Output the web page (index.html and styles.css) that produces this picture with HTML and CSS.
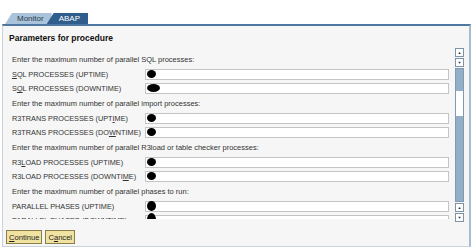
FILE: index.html
```html
<!DOCTYPE html>
<html lang="en">
<head>
  <meta charset="UTF-8" />
  <title>Parameters for procedure</title>
  <link rel="stylesheet" href="styles.css">
</head>
<body>
  <div class="tabs">
    <div class="tab">Monitor</div>
    <div class="tab active">ABAP</div>
  </div>
  <div class="panel">
    <h2 class="title">Parameters for procedure</h2>
    <div class="scroll">
      <div class="fields">
        <div class="row note">Enter the maximum number of parallel SQL processes:</div>
        <div class="row">
          <label><u>S</u>QL PROCESSES (UPTIME)</label>
          <div class="field"><span class="blob"></span></div>
        </div>
        <div class="row">
          <label>S<u>Q</u>L PROCESSES (DOWNTIME)</label>
          <div class="field"><span class="blob wide"></span></div>
        </div>
        <div class="row note">Enter the maximum number of parallel import processes:</div>
        <div class="row">
          <label>R3TRANS PROCESSES (UPT<u>I</u>ME)</label>
          <div class="field"><span class="blob"></span></div>
        </div>
        <div class="row">
          <label>R3TRANS PROCESSES (DO<u>W</u>NTIME)</label>
          <div class="field"><span class="blob"></span></div>
        </div>
        <div class="row note">Enter the maximum number of parallel R3load or table checker processes:</div>
        <div class="row">
          <label>R3<u>L</u>OAD PROCESSES (UPTIME)</label>
          <div class="field"><span class="blob"></span></div>
        </div>
        <div class="row">
          <label>R3LOAD PROCESSES (DOWNTI<u>M</u>E)</label>
          <div class="field"><span class="blob"></span></div>
        </div>
        <div class="row note">Enter the maximum number of parallel phases to run:</div>
        <div class="row">
          <label>PARALLEL PHASES (UPTIME)</label>
          <div class="field"><span class="blob big"></span></div>
        </div>
        <div class="row">
          <label>PARALLEL PHASES (DOWNTIME)</label>
          <div class="field"><span class="blob tall"></span></div>
        </div>
      </div>
      <div class="scrollbar">
        <div class="arrow">&#9650;</div>
        <div class="arrow">&#9660;</div>
        <div class="track"><div class="thumb"></div></div>
        <div class="arrow">&#9650;</div>
        <div class="arrow">&#9660;</div>
      </div>
    </div>
    <div class="buttons">
      <button class="btn"><u>C</u>ontinue</button>
      <button class="btn">C<u>a</u>ncel</button>
    </div>
  </div>
</body>
</html>
```

FILE: styles.css
```css
/* Base styles */
body {
  font-family: "Liberation Sans", Arial, sans-serif;
  background-color: #fff;
  margin: 0;
  padding: 0;
  color: #222;
}
/* Tab strip */
.tabs {
  display: flex;
  padding: 13px 0 0 5px;
  height: 11px;
}
.tab {
  font-size: 8px;
  line-height: 11px;
  padding: 0 8px 0 12px;
  background: #a9c3da;
  color: #2b3b4a;
  clip-path: polygon(7px 0, 100% 0, 100% 100%, 0 100%);
}
.tab.active {
  background: #2f5e8c;
  color: #fff;
  margin-left: -5px;
  padding: 0 8px 0 12px;
}
/* Main panel */
.panel {
  margin: 0 3px 0 2px;
  height: 223px;
  background: #f6f6f6;
  border: 1px solid #c9d3dc;
  border-top: 2px solid #4e78a0;
  border-right: 2px solid #a7bbcd;
  box-sizing: border-box;
}
.title {
  margin: 0;
  padding: 7px 0 0 6px;
  height: 21px;
  box-sizing: border-box;
  font-size: 8.5px;
  font-weight: bold;
  color: #111;
}
.scroll {
  display: flex;
  height: 175px;
}
.fields {
  flex: 1;
  height: 172px;
  overflow: hidden;
  padding: 5px 0 0 9px;
  box-sizing: border-box;
}
.row {
  display: flex;
  align-items: center;
  height: 14.7px;
  font-size: 7.5px;
  color: #333;
  white-space: nowrap;
}
.row label {
  width: 133px;
  flex: none;
  font-size: 7.3px;
}
.field {
  position: relative;
  flex: 1;
  height: 9px;
  margin-right: 3px;
  background: #fff;
  border: 1px solid #c4c4c4;
}
.blob {
  position: absolute;
  left: 1px;
  top: 0;
  width: 9px;
  height: 8px;
  border-radius: 50%;
  background: #000;
}
.blob.wide {
  width: 13px;
}
.blob.big {
  top: -1px;
  height: 10px;
}
.blob.tall {
  top: -3px;
  height: 13px;
}
/* Scrollbar column */
.scrollbar {
  width: 9px;
  margin: 0 5px 0 3px;
  display: flex;
  flex-direction: column;
  gap: 1px;
  padding-top: 1px;
}
.arrow {
  height: 7px;
  border: 1px solid #7d93a8;
  background: #fff;
  font-size: 4px;
  line-height: 7px;
  text-align: center;
  color: #333;
}
.track {
  flex: 1;
  background: #93afc8;
  border: 1px solid #7f9ab2;
  padding-top: 22px;
}
.thumb {
  height: 25px;
  background: #fff;
}
/* Buttons */
.buttons {
  display: flex;
  gap: 3px;
  padding: 8px 0 0 3px;
}
.btn {
  font-family: inherit;
  font-size: 7.6px;
  height: 14px;
  padding: 0 2px;
  background: #f0e2a0;
  border: 1px solid #8c7e47;
  color: #222;
  cursor: pointer;
}
```
